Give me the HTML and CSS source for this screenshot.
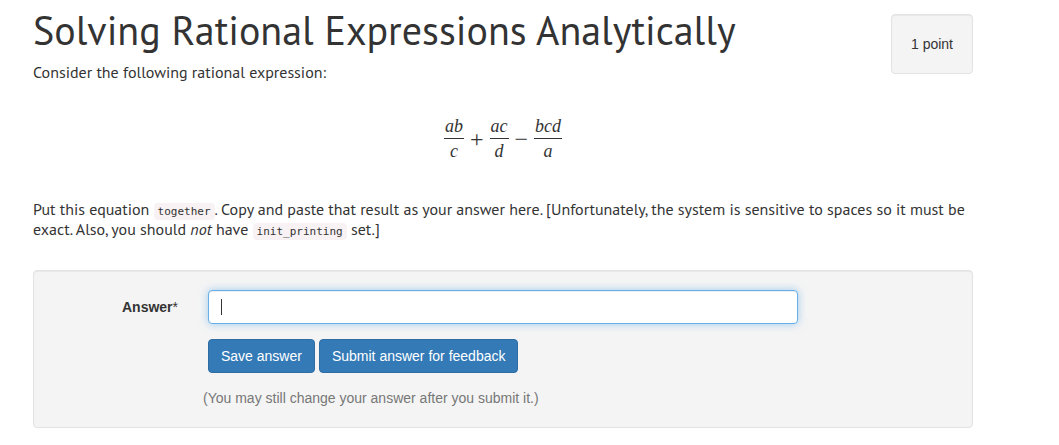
FILE: index.html
```
<!DOCTYPE html>
<html lang="en">
<head>
<meta charset="utf-8">
<title>Solving Rational Expressions Analytically</title>
<link rel="stylesheet" href="styles.css">
</head>
<body>
<main class="question">
  <header class="head">
    <div class="intro">
      <h1 class="title">Solving Rational Expressions Analytically</h1>
      <p class="text">Consider the following rational expression:</p>
    </div>
    <div class="well points">1 point</div>
  </header>
  <div class="equation">
    <span class="frac"><i class="num">ab</i><i class="den">c</i></span>
    <span class="op">+</span>
    <span class="frac"><i class="num">ac</i><i class="den">d</i></span>
    <span class="op">−</span>
    <span class="frac"><i class="num">bcd</i><i class="den">a</i></span>
  </div>
  <p class="text">Put this equation <code class="code">together</code>. Copy and paste that result as your answer here. [Unfortunately, the system is sensitive to spaces so it must be exact. Also, you should <em>not</em> have <code class="code">init_printing</code> set.]</p>
  <form class="well form">
    <label class="label" for="answer">Answer<span class="star">*</span></label>
    <input class="input" id="answer" type="text" required autofocus>
    <div class="buttons">
      <button class="btn" type="button">Save answer</button>
      <button class="btn" type="submit">Submit answer for feedback</button>
    </div>
    <p class="help">(You may still change your answer after you submit it.)</p>
  </form>
</main>
</body>
</html>
```
FILE: styles.css
```
* { box-sizing: border-box; }
body {
  margin: 0;
  background: #fff;
  color: #333;
  font: 14px/20px "Liberation Sans", Arial, sans-serif;
}
.question { margin: 0 86px 0 33px; }
.head {
  display: flex;
  justify-content: space-between;
  align-items: flex-start;
  padding-top: 8px;
}
.title {
  margin: 0 0 10px;
  font: 400 40px/44px "PT Sans", Lato, sans-serif;
}
.text {
  margin: 0;
  font: 16px/20px "PT Sans", Lato, sans-serif;
}
.well {
  background: #f4f4f4;
  border: 1px solid #e3e3e3;
  border-radius: 4px;
  box-shadow: inset 0 1px 1px rgba(0, 0, 0, .05);
}
.points { margin-top: 6px; padding: 19px; white-space: nowrap; }
.equation {
  display: flex;
  justify-content: center;
  align-items: center;
  gap: 6px;
  margin: 32px 0 36px;
  font: 18px/24px "Liberation Serif", serif;
}
.frac { display: flex; flex-direction: column; text-align: center; }
.num { padding: 0 1px; border-bottom: 1px solid #333; }
.op { font-size: 24px; }
.code {
  padding: 2px 4px;
  border-radius: 4px;
  background: #f9f2f4;
  font: 11px/14px "DejaVu Sans Mono", monospace;
}
.form {
  display: grid;
  grid-template-columns: 144px minmax(0, 590px);
  column-gap: 30px;
  margin-top: 31px;
  padding: 19px 0;
}
.label { padding-top: 7px; text-align: right; font-weight: 700; }
.star { font-weight: 400; }
.input {
  width: 100%;
  height: 34px;
  padding: 6px 12px;
  border: 1px solid #66afe9;
  border-radius: 4px;
  outline: 0;
  background: #fff linear-gradient(#333, #333) no-repeat 12px 8px / 1px 16px;
  caret-color: transparent;
  color: #333;
  font: inherit;
  box-shadow: inset 0 1px 1px rgba(0, 0, 0, .075), 0 0 8px rgba(102, 175, 233, .6);
}
.input:not(:focus), .input:valid { background-image: none; caret-color: auto; }
.buttons { grid-column: 2; display: flex; flex-wrap: wrap; gap: 4px; margin-top: 15px; }
.btn {
  padding: 6px 12px;
  border: 1px solid #2e6da4;
  border-radius: 4px;
  background: #337ab7;
  color: #fff;
  font: inherit;
}
.help { grid-column: 2; margin: 15px 0 0 -5px; color: #777; }
```
